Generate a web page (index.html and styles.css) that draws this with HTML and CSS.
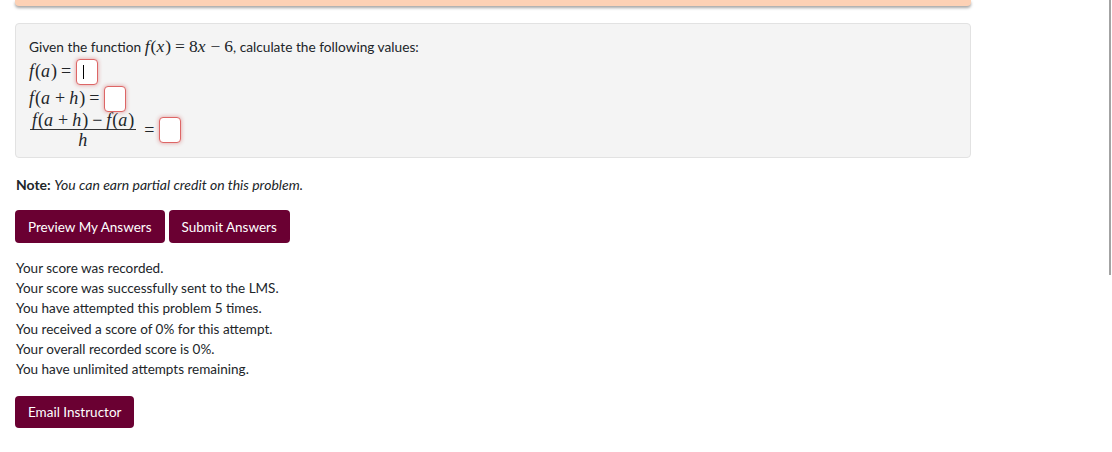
FILE: index.html
```html
<!DOCTYPE html>
<html>
<head>
<meta charset="utf-8">
<link rel="stylesheet" href="styles.css">
</head>
<body>
<div class="page">
  <div class="alert-bar"></div>
  <div class="problem">
    <div class="line">Given the function <span class="m"><i>f</i>(<i>x</i>)<span class="rel">=</span>8<i>x</i><span class="bin">−</span>6</span>, calculate the following values:</div>
    <div class="row r1"><span class="m"><i>f</i>(<i>a</i>)<span class="rel">=</span></span><span class="ans"><span class="caret"></span></span></div>
    <div class="row r2"><span class="m"><i>f</i>(<i>a</i><span class="bin">+</span><i>h</i>)<span class="rel">=</span></span><span class="ans"></span></div>
    <div class="row r3">
      <span class="m frac"><span class="num"><i>f</i>(<i>a</i><span class="bin">+</span><i>h</i>)<span class="bin">−</span><i>f</i>(<i>a</i>)</span><span class="den"><i>h</i></span></span>
      <span class="m eq">=</span><span class="ans"></span>
    </div>
  </div>
  <p class="note"><b>Note:</b> <i>You can earn partial credit on this problem.</i></p>
  <div class="btns">
    <button class="btn">Preview My Answers</button>
    <button class="btn">Submit Answers</button>
  </div>
  <div class="score">
    <div>Your score was recorded.</div>
    <div>Your score was successfully sent to the LMS.</div>
    <div>You have attempted this problem 5 times.</div>
    <div>You received a score of 0% for this attempt.</div>
    <div>Your overall recorded score is 0%.</div>
    <div>You have unlimited attempts remaining.</div>
  </div>
  <button class="btn email">Email Instructor</button>
</div>
<div class="scrollthumb"></div>
</body>
</html>
```
FILE: styles.css
```css
html, body { margin: 0; padding: 0; background: #fff; }
body {
  font-family: "Lato", "Open Sans", sans-serif;
  font-size: 13.5px;
  color: #212529;
  overflow: hidden;
}
.page {
  padding-left: 15px;
  width: 956px;
}
.alert-bar {
  height: 6px;
  background: #fdd1b5;
  border-radius: 0 0 4px 4px;
  box-shadow: 0 2px 3px rgba(0,0,0,0.35);
}
.problem {
  margin-top: 17px;
  background: #f4f4f4;
  border: 1px solid #e2e2e2;
  border-radius: 4px;
  padding: 11px 13px 13px 13px;
  height: 109px;
}
.line { line-height: 22px; font-size: 13.7px; }
.m {
  font-family: "Liberation Serif", "DejaVu Serif", serif;
  font-size: 18px;
}
.line .m { font-size: 17.5px; }
.m i { font-style: italic; padding-right: 1px; }
.rel { margin: 0 4px; }
.bin { margin: 0 4px; }
.row { display: flex; align-items: center; }
.r1 { height: 27px; }
.r2 { height: 27px; }
.r3 { height: 36px; }
.ans {
  display: inline-block;
  width: 20px;
  height: 24px;
  background: #fff;
  border: 1px solid #d66;
  border-radius: 4px;
  box-shadow: 0 0 4px rgba(200,40,40,0.45);
  margin-left: 1px;
  position: relative;
}
.caret {
  position: absolute;
  left: 6px;
  top: 5px;
  width: 1px;
  height: 14px;
  background: #000;
}
.frac {
  display: inline-flex;
  flex-direction: column;
  align-items: center;
  margin-left: 1px;
}
.num { border-bottom: 1px solid #333; padding: 0 2px 0; line-height: 18px; }
.den { line-height: 20px; }
.eq { margin-left: 8px; margin-right: 3px; }
.note { margin: 18px 0 0 1px; line-height: 17px; font-size: 14px; }
.note b { font-weight: 700; }
.btns { display: flex; gap: 4px; margin-top: 17px; }
.btn {
  font-family: inherit;
  font-size: 13.5px;
  color: #fff;
  background: #6a0032;
  border: none;
  border-radius: 4px;
  height: 33px;
  padding: 0 13px;
  cursor: pointer;
}
.score { margin-top: 15px; line-height: 20.2px; padding-left: 1px; }
.email { margin-top: 17px; height: 32px; }
.scrollthumb {
  position: fixed;
  right: 1px;
  top: 0;
  width: 2px;
  height: 275px;
  background: #a3a3a3;
}
```
